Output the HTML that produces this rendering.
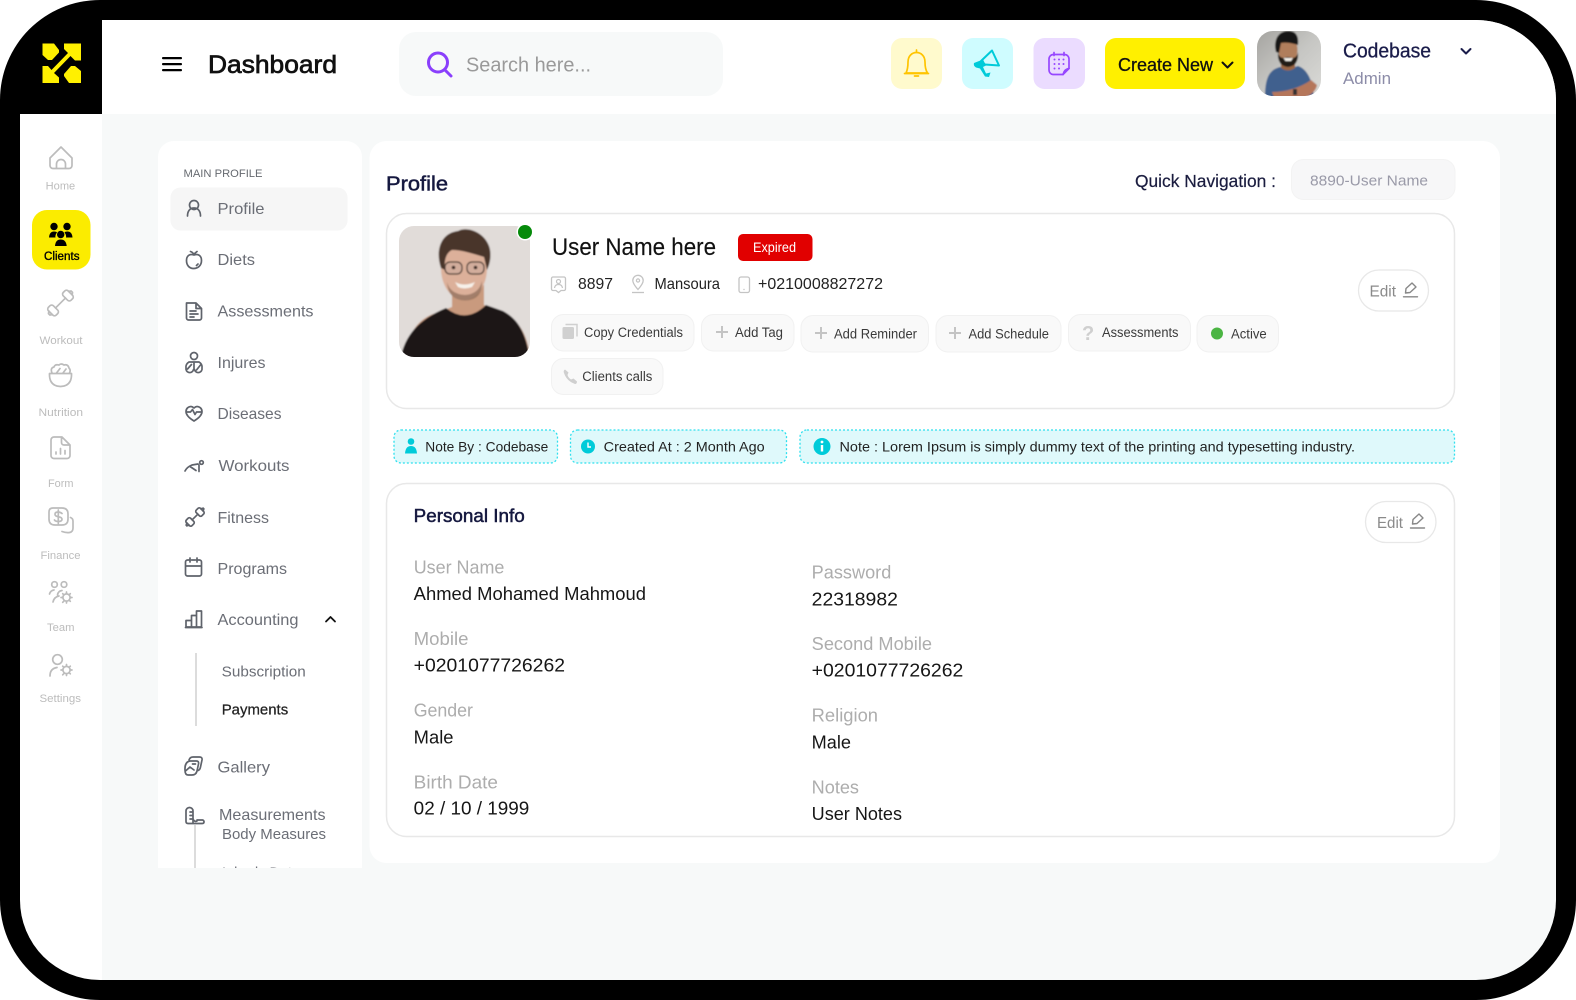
<!DOCTYPE html>
<html lang="en"><head><meta charset="utf-8"><title>Dashboard</title>
<style>
html,body{margin:0;padding:0;background:#fff;width:1576px;height:1000px;overflow:hidden}
svg{display:block}
text{font-family:"Liberation Sans",sans-serif;white-space:pre}
.lab{font-size:11px;fill:#bcbcbc}
.menu{font-size:16px;fill:#6b6e76}
.btn{font-size:13.5px;fill:#3a3a3a}
.k{font-size:18px;fill:#adadad}
.v{font-size:18px;fill:#161616}
.chip{font-size:14px;fill:#222}
.i{fill:none;stroke:#bcbcbc;stroke-width:1.7;stroke-linecap:round;stroke-linejoin:round}
.m{fill:none;stroke:#5f636b;stroke-width:1.7;stroke-linecap:round;stroke-linejoin:round}
.b{fill:#f9f9f9;stroke:#f1f1f1;stroke-width:1}
.chipbg{fill:#dff9fb;stroke:#2fe0ee;stroke-width:1.3;stroke-dasharray:2 2}
.card{fill:#fff;stroke:#e8e8e8;stroke-width:1.5}
.plus{stroke:#c4c4c4;stroke-width:2;fill:none}
.pen{fill:none;stroke:#888;stroke-width:1.4;stroke-linejoin:round;stroke-linecap:round}
</style></head><body>
<svg xmlns="http://www.w3.org/2000/svg" width="1576" height="1000" viewBox="0 0 1576 1000">
<defs>
<clipPath id="side"><path d="M158 868V157a16 16 0 0 1 16-16H346a16 16 0 0 1 16 16V868Z"/></clipPath>
<clipPath id="ph1"><rect x="399" y="226" width="131" height="131" rx="15"/></clipPath>
<clipPath id="ph2"><rect x="1257" y="31" width="64" height="65" rx="16"/></clipPath>
<clipPath id="inner"><rect x="20" y="20" width="1536" height="960" rx="80"/></clipPath>
<filter id="bl" x="-10%" y="-10%" width="120%" height="120%"><feGaussianBlur stdDeviation="0.9"/></filter>
<filter id="bl2" x="-10%" y="-10%" width="120%" height="120%"><feGaussianBlur stdDeviation="0.8"/></filter>
<linearGradient id="wall" x1="0" y1="0" x2="1" y2="1"><stop offset="0" stop-color="#a3a29e"/><stop offset=".5" stop-color="#c6c6c3"/><stop offset="1" stop-color="#dcdcd9"/></linearGradient>
</defs>

<rect width="1576" height="1000" fill="#fff"/>
<rect width="1576" height="1000" rx="100" fill="#000"/>
<g clip-path="url(#inner)">
<rect x="102" y="20" width="1454" height="960" fill="#f7f9f9"/>
<rect x="20" y="114" width="82" height="866" fill="#fff"/>
<rect x="102" y="20" width="1454" height="94" fill="#fff"/>
</g>
<path d="M10 114V100A90 90 0 0 1 100 10H102V114Z" fill="#000"/>

<!-- logo -->
<g fill="#fff000">
<path d="M42.500 43.500H54L59 50V52.500L52 60H48L42.500 55Z"/>
<path d="M81 83H69L64 76V74L71 66H75L81 71Z"/>
<path d="M64 43.500H81V60.500H75L70.500 56L54 73L59 77.500V83H42.500V66H48L51.500 70L68 53L64 49Z"/>
</g>

<!-- header -->
<g fill="#000"><rect x="162" y="57" width="20" height="2.200" rx="1"/><rect x="162" y="63" width="20" height="2.200" rx="1"/><rect x="162" y="69" width="20" height="2.200" rx="1"/></g>
<text x="208" y="73" font-size="25" textLength="129" lengthAdjust="spacingAndGlyphs" fill="#111" stroke="#111" stroke-width=".7">Dashboard</text>
<rect x="399" y="32" width="324" height="64" rx="17" fill="#f7f9f9"/>
<circle cx="438" cy="62.500" r="9.500" fill="none" stroke="#8a3ffc" stroke-width="3"/><path d="M445 70L451 76" stroke="#8a3ffc" stroke-width="3" stroke-linecap="round"/>
<text x="466" y="71.500" font-size="20" textLength="125" lengthAdjust="spacingAndGlyphs" fill="#9a9a9a">Search here...</text>

<rect x="891" y="38" width="51" height="51" rx="11" fill="#fffacd"/>
<path d="M906 73C907.500 70 908 67 908 62C908 56 912 52.500 916.500 52.500C921 52.500 925 56 925 62C925 67 925.500 70 927.500 73ZM904.500 73.500H928.500M916.500 50V52.500M914.500 76H918.500" fill="none" stroke="#ffc400" stroke-width="1.700" stroke-linecap="round" stroke-linejoin="round"/>

<rect x="962" y="38" width="51" height="51" rx="11" fill="#cffcff"/>
<path d="M981 61L992 50.500L999 65.500L985 64.500Z" fill="none" stroke="#00cbd9" stroke-width="2" stroke-linejoin="round"/>
<path d="M974 63L983 59.500L986 65.500L983 67L986 73.500L990.500 72.500L989 77L985 76.500L980 68.500L976 67.500Q973 65.500 974 63Z" fill="#00cbd9"/>

<rect x="1033.500" y="38" width="51.500" height="51" rx="11" fill="#ebdcff"/>
<g fill="none" stroke="#9747ff" stroke-width="1.700" stroke-linecap="round"><path d="M1063 74.500H1053A4.500 4.500 0 0 1 1049 70V59A4.500 4.500 0 0 1 1053.500 54.500H1064.500A4.500 4.500 0 0 1 1069 59V68.500Z"/><path d="M1054 52.500V55.500M1064 52.500V55.500M1063 74.500C1064 71 1065 69.500 1069 68.500"/></g>
<g fill="#9747ff"><circle cx="1054.500" cy="59.500" r="1"/><circle cx="1059" cy="59.500" r="1"/><circle cx="1063.500" cy="59.500" r="1"/><circle cx="1054.500" cy="64" r="1"/><circle cx="1059" cy="64" r="1"/><circle cx="1063.500" cy="64" r="1"/><circle cx="1054.500" cy="68.500" r="1"/><circle cx="1059" cy="68.500" r="1"/></g>

<rect x="1105" y="38" width="140" height="51" rx="11" fill="#fff000"/>
<text x="1118" y="71" font-size="18" textLength="95" lengthAdjust="spacingAndGlyphs" fill="#111" stroke="#111" stroke-width=".3">Create New</text>
<path d="M1222.500 62.500L1227.500 67.500L1232.500 62.500" fill="none" stroke="#111" stroke-width="2" stroke-linecap="round" stroke-linejoin="round"/>

<!-- avatar -->
<g clip-path="url(#ph2)"><g filter="url(#bl2)">
<rect x="1255" y="29" width="68" height="69" fill="url(#wall)"/>
<path d="M1265 98C1265 80 1268 70 1280 67L1288 69L1298 66C1307 69 1313 80 1314 98Z" fill="#40608e"/>
<path d="M1281 60H1295V68Q1288 73 1281 68Z" fill="#9a6644"/>
<ellipse cx="1288" cy="50" rx="9.500" ry="13" fill="#b07e5b"/>
<path d="M1278 52Q1279 58 1284 58Q1288 56 1292 58Q1297 58 1298 52Q1299 66 1288 67Q1277 66 1278 52Z" fill="#241a15"/>
<path d="M1283.500 58H1293L1291 61H1285.500Z" fill="#f2efe9"/>
<path d="M1276 52C1273 39 1279 31 1288 31C1296 31 1299 36 1298 45C1292 43 1285 42 1281 43L1279 53Z" fill="#171412"/>
<path d="M1272 92C1285 92 1300 88 1311 80L1317 85Q1316 92 1306 97H1274Z" fill="#b5765a"/>
<rect x="1293" y="89" width="4" height="6" fill="#333"/>
</g></g>

<text x="1343" y="57.500" font-size="20" textLength="88" lengthAdjust="spacingAndGlyphs" fill="#1a1c4a" stroke="#1a1c4a" stroke-width=".3">Codebase</text>
<text x="1343" y="84" font-size="16.500" textLength="48" lengthAdjust="spacingAndGlyphs" fill="#8c8ca8">Admin</text>
<path d="M1461.500 49L1466 53.500L1470.500 49" fill="none" stroke="#1a1c4a" stroke-width="2" stroke-linecap="round" stroke-linejoin="round"/>

<!-- left rail -->
<path class="i" d="M50 158L61 147L72 158V165.500A3 3 0 0 1 69 168.500H53A3 3 0 0 1 50 165.500ZM56.500 168.500V164A4.500 4.500 0 0 1 65.500 164V168.500"/>
<text class="lab" x="45.700" y="189.500" textLength="29.500" lengthAdjust="spacingAndGlyphs">Home</text>

<rect x="32" y="210" width="58.500" height="59.500" rx="15" fill="#fbec00"/>
<g fill="#000"><circle cx="54" cy="226.500" r="3.700"/><circle cx="67" cy="226.500" r="3.700"/><circle cx="60.700" cy="234.500" r="3.700"/>
<path d="M49 237.500Q49.500 231.500 54 231.500Q56.500 231.500 57 232.500Q55 235 55.500 237.500Z"/><path d="M72.500 237.500Q72 231.500 67.500 231.500Q65 231.500 64.500 232.500Q66.500 235 66 237.500Z"/>
<path d="M55 246Q55.500 239.500 60.700 239.500Q66 239.500 66.700 246Z"/></g>
<text x="44" y="260" font-size="11.500" textLength="35.500" lengthAdjust="spacingAndGlyphs" fill="#000" stroke="#000" stroke-width=".35">Clients</text>

<g class="i" transform="translate(60.500 303) rotate(-45)"><rect x="-14" y="-5.500" width="7" height="11" rx="2.500"/><rect x="7" y="-5.500" width="7" height="11" rx="2.500"/><path d="M-7 0H7M-14 -2.500L-16 -1V1L-14 2.500M14 -2.500L16 -1V1L14 2.500"/></g>
<text class="lab" x="39.500" y="344" textLength="43" lengthAdjust="spacingAndGlyphs">Workout</text>

<path class="i" d="M49.500 373.500H71.500Q72 386 60.500 386.500Q49 386 49.500 373.500ZM52 373Q50 368 54 367Q55 364 59 365Q61 363 64 365Q68 364 69 368Q71 370 69.500 373M56.500 373L60 368.500M63 373L66 369"/>
<text class="lab" x="38.500" y="416" textLength="44.500" lengthAdjust="spacingAndGlyphs">Nutrition</text>

<path class="i" d="M54 437H62L70 445V455A3 3 0 0 1 67 458.500H54A3 3 0 0 1 51 455V440A3 3 0 0 1 54 437ZM61.500 437.500V442.500A2.500 2.500 0 0 0 64 445H69.500M56 454V452M60.500 454V448.500M65 454V450.500"/>
<text class="lab" x="48" y="487" textLength="25.500" lengthAdjust="spacingAndGlyphs">Form</text>

<path class="i" d="M53 508H62Q68 508 68 514V519Q68 525 62 525H55Q49 525 49 519V512Q49 508 53 508ZM62 513.500Q60.500 512 58 512Q55 512 55 514.300Q55 516.300 58.500 516.800Q62 517.300 62 519.300Q62 521.500 58.500 521.500Q55.500 521.500 54.500 520M58.300 510V523.500M62 531.500Q66 533 69.500 532.500Q73 532 73 528V521Q73 518.500 70.500 517.500"/>
<text class="lab" x="40.500" y="559" textLength="40" lengthAdjust="spacingAndGlyphs">Finance</text>

<g class="i" stroke-width="1.500"><circle cx="54.500" cy="584.500" r="2.800"/><circle cx="64" cy="584.500" r="2.800"/><path d="M49.500 594Q50.500 590.500 54 590M57.500 595Q58 591 62 590.500M53 602Q54 597 59 596"/><circle cx="66.500" cy="597.500" r="3.600"/><path d="M66.500 592V593.500M66.500 601.500V603M61 597.500H62.500M70.500 597.500H72M62.700 593.700L63.700 594.700M69.300 600.300L70.300 601.300M70.300 593.700L69.300 594.700M63.700 601.300L62.700 602.300"/></g>
<text class="lab" x="47" y="631" textLength="27.500" lengthAdjust="spacingAndGlyphs">Team</text>

<g class="i" stroke-width="1.500"><circle cx="57.500" cy="659.500" r="4.800"/><path d="M50 676Q50 668.500 57 667.500"/><circle cx="66.500" cy="670" r="3.600"/><path d="M66.500 664.500V666M66.500 674V675.500M61 670H62.500M70.500 670H72M62.700 666.200L63.700 667.200M69.300 672.800L70.300 673.800M70.300 666.200L69.300 667.200M63.700 673.800L62.700 674.800"/></g>
<text class="lab" x="39.500" y="702" textLength="41.500" lengthAdjust="spacingAndGlyphs">Settings</text>

<!-- side menu panel -->
<path d="M158 868V157a16 16 0 0 1 16-16H346a16 16 0 0 1 16 16V868Z" fill="#fff"/>
<text x="183.500" y="177" font-size="11" textLength="79" lengthAdjust="spacingAndGlyphs" fill="#666a70">MAIN PROFILE</text>
<rect x="170.500" y="187.500" width="177" height="43" rx="10" fill="#f6f6f6"/>

<path class="m" d="M187.500 216C187.500 211 190 208 194 208C198 208 200.500 211 200.500 216"/><circle class="m" cx="194" cy="205" r="4.500"/>
<text class="menu" x="217.500" y="214" textLength="47" lengthAdjust="spacingAndGlyphs">Profile</text>

<path class="m" d="M194 255C190 253.500 186.500 255.500 186.500 260.500C186.500 265.500 189.500 268.500 193.500 268.500C198 268.500 201.500 265.500 201.500 260.500C201.500 255.500 198 253.500 194 255ZM194 255C193.500 253 192 252 190.500 251.500M194 254L197 251.500M198 264L196.500 265.500"/>
<text class="menu" x="217.500" y="265" textLength="37.500" lengthAdjust="spacingAndGlyphs">Diets</text>

<path class="m" d="M186.500 303H196L201.500 308.500V318A2 2 0 0 1 199.500 320H188.500A2 2 0 0 1 186.500 318ZM196 303.500V308.500H201M190 311H196M190 314H198M190 317H194"/>
<text class="menu" x="217.500" y="316.700" textLength="96" lengthAdjust="spacingAndGlyphs">Assessments</text>

<circle class="m" cx="194" cy="356" r="3.500"/><path class="m" d="M189 362H199Q202.500 364 202 368A3.500 3.500 0 0 1 194.500 369.500Q194 370 193.500 369.500A3.500 3.500 0 0 1 186 368Q185.500 364 189 362ZM194 363V369M187.500 369L191.500 364.500M196.500 370L200.500 365"/>
<text class="menu" x="217.500" y="368" textLength="48" lengthAdjust="spacingAndGlyphs">Injures</text>

<path class="m" d="M194 421C189 418 186 415 186 411.500C186 408 189 406.500 191 406.500C192.500 406.500 193.500 407.500 194 408C194.500 407.500 195.500 406.500 197 406.500C199 406.500 202 408 202 411.500C202 415 199 418 194 421ZM186.500 412H190.500L192.500 409.500L195 414.500L196.500 412H201.500"/>
<text class="menu" x="217.500" y="419" textLength="64" lengthAdjust="spacingAndGlyphs">Diseases</text>

<path class="m" stroke-width="2" d="M185 471Q187 467 192 465L198 464M190 466.500L196 470.500M199 465V471.500"/><circle class="m" cx="201.500" cy="462.500" r="1.800"/>
<text class="menu" x="218.500" y="471" textLength="71" lengthAdjust="spacingAndGlyphs">Workouts</text>

<g class="m" transform="translate(195 517) rotate(-45)"><rect x="-10" y="-4" width="6" height="8" rx="1.800"/><rect x="4" y="-4" width="6" height="8" rx="1.800"/><path d="M-4 0H4M-10 -1.500L-12 -.5V.5L-10 1.500M10 -1.500L12 -.5V.5L10 1.500"/></g>
<text class="menu" x="217.500" y="523" textLength="51.500" lengthAdjust="spacingAndGlyphs">Fitness</text>

<path class="m" d="M189 560H187.500A2 2 0 0 0 185.500 562V574A2 2 0 0 0 187.500 576H199.500A2 2 0 0 0 201.500 574V562A2 2 0 0 0 199.500 560H198M185.500 566H201.500M190 558V562M197 558V562M191.500 560H195.500"/>
<text class="menu" x="217.500" y="574" textLength="69.500" lengthAdjust="spacingAndGlyphs">Programs</text>

<path class="m" d="M186 627V620.500H191.500V627ZM191.500 627V615.500H196.500V627ZM196.500 627V611H201.500V627ZM185.500 627.500H202"/>
<text class="menu" x="217.500" y="625" textLength="81" lengthAdjust="spacingAndGlyphs">Accounting</text>
<path d="M326 621.500L330.500 617L335 621.500" fill="none" stroke="#111" stroke-width="1.800" stroke-linecap="round" stroke-linejoin="round"/>

<rect x="195" y="653" width="2" height="73" fill="#dcdcdc"/>
<text x="221.700" y="676.500" font-size="15" textLength="84" lengthAdjust="spacingAndGlyphs" fill="#6b6e76">Subscription</text>
<text x="221.700" y="714.500" font-size="15" textLength="66.500" lengthAdjust="spacingAndGlyphs" fill="#222" stroke="#222" stroke-width=".25">Payments</text>

<path class="m" d="M185 770Q184.500 762 190 761H196.500Q199 761 198.500 764L197 771Q196 775 192 775H188Q185 775 185 770ZM189 760Q190 757 193 757H199.500Q202.500 757 202 760L200.500 767Q200 770 198 770.500M185.500 771L190 767L194 770M192.500 764H195.500"/>
<text class="menu" x="217.500" y="772.500" textLength="52.500" lengthAdjust="spacingAndGlyphs">Gallery</text>

<g clip-path="url(#side)">
<path class="m" d="M186 811A3.500 3.500 0 0 1 193 811V823.500H188Q186 823.500 186 821.500ZM193 818.500L193.500 820Q195 822 197 821V820H202.500A2 2 0 0 1 204 821.500V822Q204 823.500 202 823.500H193M190 812H192.500M190 815.500H192.500M190 819H192.500"/>
<rect x="194" y="825" width="2" height="50" fill="#dcdcdc"/>
<text class="menu" x="219" y="820" textLength="106.500" lengthAdjust="spacingAndGlyphs">Measurements</text>
<text x="222" y="839" font-size="15" textLength="104" lengthAdjust="spacingAndGlyphs" fill="#6b6e76">Body Measures</text>
<text x="222" y="877.500" font-size="15" textLength="78" lengthAdjust="spacingAndGlyphs" fill="#6b6e76">Inbody Data</text>
</g>

<!-- main panel -->
<rect x="369.500" y="141" width="1130.500" height="722" rx="17" fill="#fff"/>
<text x="386" y="190.500" font-size="20.500" textLength="62" lengthAdjust="spacingAndGlyphs" fill="#15183f" stroke="#15183f" stroke-width=".5">Profile</text>
<text x="1135" y="187" font-size="17.500" textLength="141" lengthAdjust="spacingAndGlyphs" fill="#1a1c3f" stroke="#1a1c3f" stroke-width=".2">Quick Navigation :</text>
<rect x="1291.500" y="159.500" width="163.500" height="40" rx="12" fill="#f7f7f8" stroke="#f3f3f3"/>
<text x="1310" y="185.500" font-size="15" textLength="118" lengthAdjust="spacingAndGlyphs" fill="#9a9aa8">8890-User Name</text>

<!-- profile card -->
<rect class="card" x="386.500" y="213.500" width="1068" height="195" rx="20"/>
<g clip-path="url(#ph1)"><g filter="url(#bl)">
<rect x="396" y="224" width="137" height="136" fill="#e1dcd9"/>
<path d="M452 288V307L436 313C420 318 409 330 404 357H530C527 330 516 318 500 311L484 305V285Z" fill="#c99a7e"/>
<path d="M446 308Q466 324 486 305L503 311C516 318 526 330 530 360H400C405 335 418 320 446 308Z" fill="#1b1716"/>
<ellipse cx="464" cy="268" rx="23" ry="32" fill="#dcb09a"/>
<path d="M441 268C435 250 441 233 458 231C467 226 484 232 489 246C492 254 490 264 487 270L484 257C474 254 462 250 452 250C446 253 444 260 445 270Z" fill="#49352a"/>
<path d="M447 282Q450 294 465 295Q479 294 482 281Q483 300 465 300.500Q448 300 447 282Z" fill="#8f6d5a" opacity=".75"/>
<rect x="445" y="262" width="17" height="12" rx="5" fill="#d2ad9c" stroke="#3f3029" stroke-width="1.200"/>
<rect x="467" y="262" width="17" height="12" rx="5" fill="#d2ad9c" stroke="#3f3029" stroke-width="1.200"/>
<circle cx="453.500" cy="267.500" r="1.800" fill="#3a2a22"/><circle cx="475.500" cy="267.500" r="1.800" fill="#3a2a22"/>
<path d="M455 282Q464 287 475 282L472 287Q464 290 458 287Z" fill="#f7f1ea"/>
</g></g>
<circle cx="525" cy="232" r="8.500" fill="#fff"/><circle cx="525" cy="232" r="7" fill="#058a0a"/>

<text x="552" y="255" font-size="24" textLength="164" lengthAdjust="spacingAndGlyphs" fill="#111" stroke="#111" stroke-width=".15">User Name here</text>
<rect x="738" y="234" width="74.500" height="27" rx="5" fill="#e10000"/>
<text x="753" y="252" font-size="14" textLength="43" lengthAdjust="spacingAndGlyphs" fill="#fff">Expired</text>

<path d="M553 277H564A1.500 1.500 0 0 1 565.500 278.500V289A1.500 1.500 0 0 1 564 290.500H561L558.500 292.500L556 290.500H553A1.500 1.500 0 0 1 551.500 289V278.500A1.500 1.500 0 0 1 553 277Z" fill="none" stroke="#c4c4c4" stroke-width="1.300"/><circle cx="558.500" cy="281.500" r="2" fill="none" stroke="#c4c4c4" stroke-width="1.200"/><path d="M554.500 288Q555 284.500 558.500 284.500Q562 284.500 562.500 288" fill="none" stroke="#c4c4c4" stroke-width="1.200"/>
<text x="578" y="289" font-size="16" textLength="35" lengthAdjust="spacingAndGlyphs" fill="#222">8897</text>
<path d="M638 289.500C634 285 632.800 282.500 632.800 280.500A5.200 5.200 0 0 1 643.200 280.500C643.200 282.500 642 285 638 289.500Z" fill="none" stroke="#c4c4c4" stroke-width="1.300"/><circle cx="638" cy="280.500" r="1.600" fill="none" stroke="#c4c4c4" stroke-width="1.200"/><path d="M632 292.500H644" stroke="#c4c4c4" stroke-width="1.300"/>
<text x="654.500" y="289" font-size="16" textLength="65.500" lengthAdjust="spacingAndGlyphs" fill="#222">Mansoura</text>
<rect x="739" y="277" width="10.500" height="15.500" rx="2" fill="none" stroke="#c4c4c4" stroke-width="1.300"/><circle cx="744" cy="289.500" r=".7" fill="#c4c4c4"/>
<text x="758" y="289" font-size="16" textLength="125" lengthAdjust="spacingAndGlyphs" fill="#222">+0210008827272</text>

<rect class="b" x="551.500" y="314.500" width="142.500" height="36.500" rx="12"/>
<rect x="562.500" y="327" width="11.500" height="12" rx="1.500" fill="#d0d0d0"/><path d="M565.500 324.500H577V336.500" fill="none" stroke="#d0d0d0" stroke-width="1.500"/>
<text class="btn" x="584" y="337" textLength="99" lengthAdjust="spacingAndGlyphs">Copy Credentials</text>
<rect class="b" x="701.500" y="314.500" width="92.500" height="36.500" rx="12"/>
<path class="plus" d="M716 332H728M722 326V338"/>
<text class="btn" x="735" y="337" textLength="48" lengthAdjust="spacingAndGlyphs">Add Tag</text>
<rect class="b" x="801" y="315.500" width="127.500" height="36.500" rx="12"/>
<path class="plus" d="M815 333H827M821 327V339"/>
<text class="btn" x="834" y="338.500" textLength="83" lengthAdjust="spacingAndGlyphs">Add Reminder</text>
<rect class="b" x="936" y="315.500" width="125" height="36.500" rx="12"/>
<path class="plus" d="M949 333H961M955 327V339"/>
<text class="btn" x="968.500" y="338.500" textLength="80.500" lengthAdjust="spacingAndGlyphs">Add Schedule</text>
<rect class="b" x="1068.500" y="314.500" width="122" height="36.500" rx="12"/>
<text x="1082" y="340" font-size="20" font-weight="700" fill="#cfcfcf">?</text>
<text class="btn" x="1102" y="337" textLength="76.500" lengthAdjust="spacingAndGlyphs">Assessments</text>
<rect class="b" x="1197" y="315.500" width="81.500" height="36.500" rx="12"/>
<circle cx="1217" cy="333.500" r="6" fill="#4bb543"/>
<text class="btn" x="1231" y="338.500" textLength="35.700" lengthAdjust="spacingAndGlyphs">Active</text>
<rect class="b" x="551.500" y="358.500" width="111.500" height="36" rx="12"/>
<path d="M565 369.500Q563 370.500 564 373Q566.500 381 575 384Q577 384 577 381.500L573.500 378.500L571 379.500Q568.500 378 567.500 375L568.500 372.500Z" fill="#cfcfcf"/>
<text class="btn" x="582.300" y="381" textLength="70" lengthAdjust="spacingAndGlyphs">Clients calls</text>

<rect x="1358.500" y="270" width="70" height="41" rx="20.500" fill="#fff" stroke="#e8e8e8" stroke-width="1.300"/>
<text x="1369.500" y="296.500" font-size="16" textLength="26.500" lengthAdjust="spacingAndGlyphs" fill="#8a8a8a">Edit</text>
<path class="pen" d="M1405.500 293L1406 288.500L1412 283L1416 287L1410 292.500ZM1403.500 296.800H1417.500"/>

<!-- chips -->
<rect class="chipbg" x="394" y="430" width="163.500" height="33" rx="7"/>
<circle cx="411" cy="441.500" r="3.300" fill="#00cbd9"/><path d="M405 453.500Q405.500 446 411 446Q416.500 446 417 453.500Z" fill="#00cbd9"/>
<text class="chip" x="425.300" y="451.300" textLength="123" lengthAdjust="spacingAndGlyphs">Note By : Codebase</text>
<rect class="chipbg" x="570.500" y="430" width="216" height="33" rx="7"/>
<circle cx="588" cy="446.500" r="7" fill="#00cbd9"/><path d="M588 442.500V447H591" fill="none" stroke="#fff" stroke-width="1.400"/>
<text class="chip" x="603.700" y="451.300" textLength="161" lengthAdjust="spacingAndGlyphs">Created At : 2 Month Ago</text>
<rect class="chipbg" x="800" y="430" width="654.500" height="33" rx="7"/>
<circle cx="822" cy="446.500" r="8.500" fill="#00cbd9"/><rect x="820.800" y="445" width="2.400" height="6.500" fill="#fff"/><circle cx="822" cy="442" r="1.400" fill="#fff"/>
<text class="chip" x="839.500" y="451.300" textLength="515.500" lengthAdjust="spacingAndGlyphs">Note : Lorem Ipsum is simply dummy text of the printing and typesetting industry.</text>

<!-- personal info -->
<rect class="card" x="386.500" y="483.500" width="1068" height="353" rx="20"/>
<text x="413.700" y="522" font-size="18" textLength="111" lengthAdjust="spacingAndGlyphs" fill="#15183f" stroke="#15183f" stroke-width=".5">Personal Info</text>
<rect x="1365.500" y="501.500" width="70.500" height="41" rx="20.500" fill="#fff" stroke="#e8e8e8" stroke-width="1.300"/>
<text x="1377" y="528" font-size="16" textLength="26" lengthAdjust="spacingAndGlyphs" fill="#8a8a8a">Edit</text>
<path class="pen" d="M1412.500 524L1413 519.500L1419 514L1423 518L1417 523.500ZM1410.500 528H1424.500"/>

<text class="k" x="413.700" y="573.300" textLength="90.700" lengthAdjust="spacingAndGlyphs">User Name</text>
<text class="v" x="413.700" y="600" textLength="232.300" lengthAdjust="spacingAndGlyphs">Ahmed Mohamed Mahmoud</text>
<text class="k" x="413.700" y="645" textLength="54.800" lengthAdjust="spacingAndGlyphs">Mobile</text>
<text class="v" x="413.700" y="671.700" textLength="151.300" lengthAdjust="spacingAndGlyphs">+0201077726262</text>
<text class="k" x="413.700" y="716.700" textLength="59.300" lengthAdjust="spacingAndGlyphs">Gender</text>
<text class="v" x="413.700" y="743.300" textLength="39.800" lengthAdjust="spacingAndGlyphs">Male</text>
<text class="k" x="413.700" y="788.300" textLength="84.300" lengthAdjust="spacingAndGlyphs">Birth Date</text>
<text class="v" x="413.700" y="814.300" textLength="115.600" lengthAdjust="spacingAndGlyphs">02 / 10 / 1999</text>

<text class="k" x="811.700" y="578.700" textLength="79.600" lengthAdjust="spacingAndGlyphs">Password</text>
<text class="v" x="811.700" y="605.300" textLength="86.200" lengthAdjust="spacingAndGlyphs">22318982</text>
<text class="k" x="811.700" y="650" textLength="120.300" lengthAdjust="spacingAndGlyphs">Second Mobile</text>
<text class="v" x="811.700" y="676.700" textLength="151.600" lengthAdjust="spacingAndGlyphs">+0201077726262</text>
<text class="k" x="811.700" y="721.700" textLength="66.300" lengthAdjust="spacingAndGlyphs">Religion</text>
<text class="v" x="811.700" y="748.300" textLength="39.300" lengthAdjust="spacingAndGlyphs">Male</text>
<text class="k" x="811.700" y="793.300" textLength="47.300" lengthAdjust="spacingAndGlyphs">Notes</text>
<text class="v" x="811.700" y="820" textLength="90.300" lengthAdjust="spacingAndGlyphs">User Notes</text>
</svg>
</body></html>
